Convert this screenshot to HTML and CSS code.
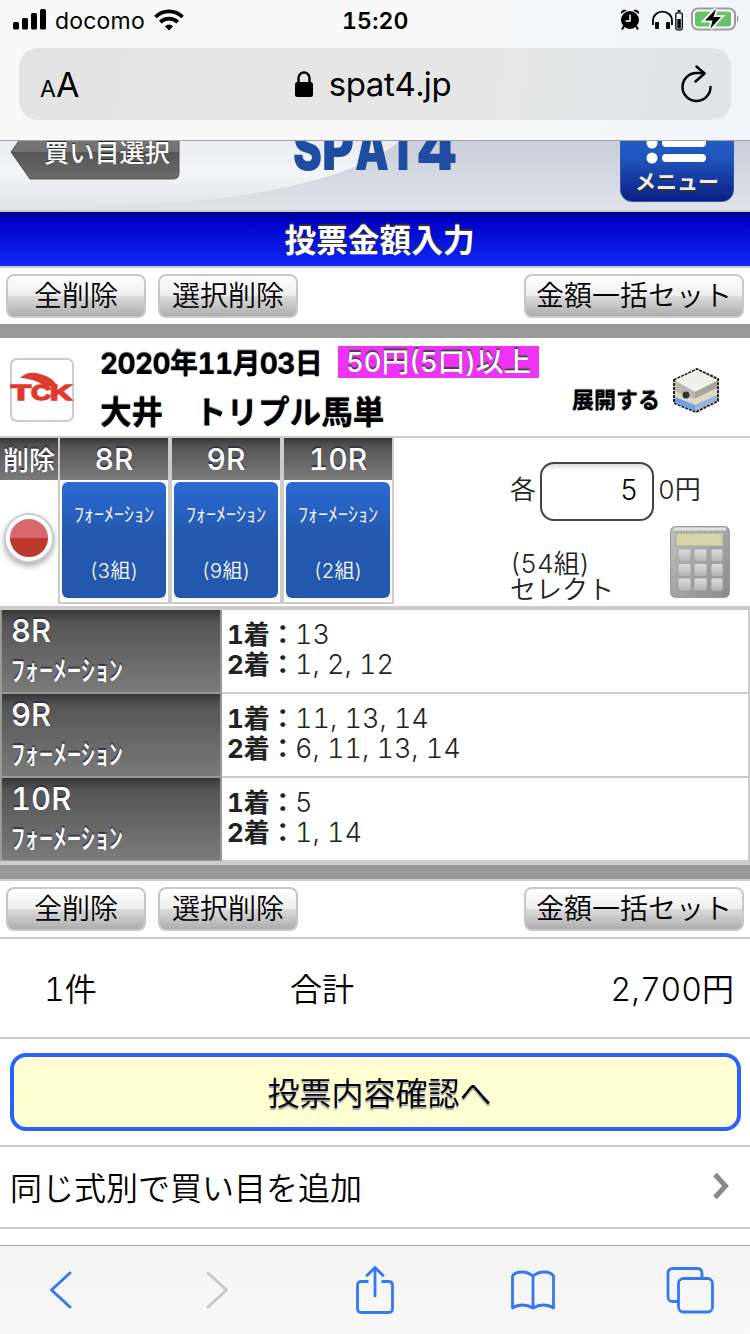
FILE: index.html
```html
<!DOCTYPE html>
<html lang="ja">
<head>
<meta charset="utf-8">
<title>投票金額入力</title>
<link rel="stylesheet" href="styles.css">
</head>
<body>
<div class="browser-top">
  <div class="status">
    <svg class="signal" width="34" height="22" viewBox="0 0 34 22"><rect x="0" y="13" width="6" height="7.500" rx="1.500"/><rect x="9" y="9" width="6" height="11.500" rx="1.500"/><rect x="18" y="4" width="6" height="16.500" rx="1.500"/><rect x="27" y="0" width="6" height="20.500" rx="1.500"/></svg>
    <span class="carrier">docomo</span>
    <svg class="wifi" width="30" height="22" viewBox="0 0 30 22" fill="none" stroke="#000" stroke-width="3.900"><path d="M1.500 8A19 19 0 0 1 28.500 8"/><path d="M6.300 13.200A12.300 12.300 0 0 1 23.700 13.200"/><path d="M15 21.500L10.800 17.300Q15 13.800 19.200 17.300Z" fill="#000" stroke="none"/></svg>
    <span class="clock">15:20</span>
    <span class="status-icons">
      <svg width="18" height="22" viewBox="0 0 18 22"><path d="M0 5V2.500L3 .5 6 1.500Q2 3 0 5ZM18 5V2.500L15 .5 12 1.500Q16 3 18 5Z"/><circle cx="9" cy="11" r="9"/><path d="M3 17l-2 3.500M15 17l2 3.500" stroke="#000" stroke-width="2"/><path d="M9 5.500V12H4.500" fill="none" stroke="#fff" stroke-width="1.500"/></svg>
      <svg class="phones" width="32" height="22" viewBox="0 0 32 22"><path d="M1 16V12C1 -.5 20 -.5 20 12V16" fill="none" stroke="#000" stroke-width="1.800"/><rect x="3" y="13" width="4" height="7" rx="1"/><rect x="14" y="13" width="4" height="7" rx="1"/><rect x="23.800" y="3.800" width="6.500" height="17" rx="1.500" fill="none" stroke="#000" stroke-width="1.300"/><rect x="25.300" y="10" width="3.500" height="9.500"/><rect x="25.500" y="1" width="3" height="1.800"/></svg>
      <svg width="49" height="24" viewBox="0 0 49 24"><rect x="1" y="1.500" width="43" height="21" rx="6" fill="#fff" stroke="#9b9b9d" stroke-width="2"/><rect x="4" y="4.500" width="36" height="15" rx="3" fill="#64c466"/><path d="M46 8q3 4 0 8z" fill="#9b9b9d"/><path d="M25 2L14 13.500h7.500l-2 8L30 10h-7.500Z" stroke="#f4f4f4" stroke-width="4" paint-order="stroke"/></svg>
    </span>
  </div>
  <div class="address">
    <span class="aa"><span class="aa-small">A</span>A</span>
    <span class="url"><svg width="18" height="26" viewBox="0 0 18 26"><path d="M3.500 13V7a5.500 5.500 0 0 1 11 0V13" fill="none" stroke="#000" stroke-width="2.400"/><rect y="11" width="18" height="15" rx="2.500"/></svg>spat4.jp</span>
    <svg class="reload" width="32" height="38" viewBox="0 0 32 38" fill="none" stroke="#000" stroke-width="2.500" stroke-linecap="round" stroke-linejoin="round"><path d="M29.500 22A14 14 0 1 1 15.500 8H23"/><path d="M15.500 1.500L23.500 8.500 14.500 16.500"/></svg>
  </div>
</div>

<div class="site-header">
  <svg class="sweep" width="750" height="69" viewBox="0 0 750 69"><defs><linearGradient id="sweepFill" x1="0" y1="0" x2="0" y2="1"><stop offset="0" stop-color="#c9ced9"/><stop offset="1" stop-color="#dfe2e8"/></linearGradient></defs><path d="M60 66Q320 64 400 0H750V69H60Z" fill="url(#sweepFill)"/></svg>
  <div class="back"><svg width="170" height="56" viewBox="0 0 170 56"><defs><linearGradient id="backFill" x1="0" y1="0" x2="0" y2="1"><stop offset="0" stop-color="#777"/><stop offset=".49" stop-color="#737373"/><stop offset=".5" stop-color="#555"/><stop offset="1" stop-color="#6c6c6c"/></linearGradient></defs><path d="M1 28L20 1H164q5 0 5 5V49q0 6-6 6H20Z" fill="url(#backFill)" stroke="#555"/></svg><span>買い目選択</span></div>
  <svg class="logo" width="162" height="58" viewBox="0 0 162 58"><text x="-1" y="57" textLength="29" lengthAdjust="spacingAndGlyphs">S</text><text x="28" y="57" textLength="32" lengthAdjust="spacingAndGlyphs">P</text><text x="61" y="57" textLength="34" lengthAdjust="spacingAndGlyphs">A</text><text x="94" y="57" textLength="30" lengthAdjust="spacingAndGlyphs">T</text><text x="124" y="57" textLength="38" lengthAdjust="spacingAndGlyphs">4</text></svg>
  <div class="menu"><svg width="60" height="42" viewBox="0 0 60 42" fill="#fff"><circle cx="6" cy="6" r="5.500"/><circle cx="6" cy="21" r="5.500"/><circle cx="6" cy="36" r="5.500"/><rect x="16" y="2" width="44" height="8" rx="4"/><rect x="16" y="17" width="44" height="8" rx="4"/><rect x="16" y="32" width="44" height="8" rx="4"/></svg><span>メニュー</span></div>
</div>

<h1 class="title">投票金額入力</h1>

<div class="actions">
  <button class="btn">全削除</button><button class="btn">選択削除</button><button class="btn btn-wide">金額一括セット</button>
</div>
<div class="divider"></div>

<div class="race">
  <svg class="track" width="64" height="64" viewBox="0 0 64 64"><rect x="1" y="1" width="62" height="62" rx="6" fill="#fff" stroke="#ccc" stroke-width="2"/><path d="M10 20Q18 12 30 16Q43 19 48 29Q36 30 28 24Q18 20 10 20Z" fill="#e13a2c"/><g class="track-name"><text x="1" y="42" textLength="20" lengthAdjust="spacingAndGlyphs">T</text><text x="21" y="42" textLength="20" lengthAdjust="spacingAndGlyphs">C</text><text x="40" y="42" textLength="22" lengthAdjust="spacingAndGlyphs">K</text></g></svg>
  <div class="race-text">
    <div class="race-date"><span class="date">2020年11月03日</span><span class="minimum">50円(5口)以上</span></div>
    <div class="race-name">大井　トリプル馬単</div>
  </div>
  <div class="expand">展開する</div>
  <svg class="box" width="48" height="46" viewBox="0 0 48 46"><path d="M2 12L25 1 46 11V33L24 44 2 35Z" fill="#d6d5cb" stroke="#222" stroke-width="2" stroke-dasharray="3 1"/><path d="M3 12L25 2 45 12 23 24Z" fill="#efefeb"/><path d="M3 13L23 24V33L3 24Z" fill="#b9b8ae"/><path d="M23 24L45 13V22L23 33Z" fill="#a5a59a"/><path d="M3 23L22 31 45 20V26L23 36 3 28Z" fill="#dddac0"/><path d="M3 29L23 37V43L3 35Z" fill="#719fe3"/><path d="M23 37L45 27V32L23 43Z" fill="#96b4df"/><circle cx="14" cy="27" r="3.500" fill="#333"/></svg>
</div>

<div class="bet">
  <div class="del-col"><div class="th th-del">削除</div><div class="del-body"><span class="radio"></span></div></div>
  <div class="leg"><div class="th">8R</div><div class="pick"><span>ﾌｫｰﾒｰｼｮﾝ</span><span>(3組)</span></div></div>
  <div class="leg"><div class="th">9R</div><div class="pick"><span>ﾌｫｰﾒｰｼｮﾝ</span><span>(9組)</span></div></div>
  <div class="leg"><div class="th">10R</div><div class="pick"><span>ﾌｫｰﾒｰｼｮﾝ</span><span>(2組)</span></div></div>
  <div class="amount">
    <div class="amount-row"><span>各</span><span class="field">5</span><span>0円</span></div>
    <div class="select-row"><div class="select-text">(54組)<br>セレクト</div>
      <svg width="60" height="72" viewBox="0 0 60 72"><defs><linearGradient id="calcBody" x1="0" y1="0" x2="1" y2="1"><stop offset="0" stop-color="#c0c0c0"/><stop offset="1" stop-color="#8a8a8a"/></linearGradient><linearGradient id="calcKey" x1="0" y1="0" x2="0" y2="1"><stop offset="0" stop-color="#dedede"/><stop offset="1" stop-color="#b2b2b2"/></linearGradient></defs><rect x=".5" y=".5" width="59" height="71" rx="5" fill="url(#calcBody)" stroke="#999"/><path d="M4 3H56" stroke="#e2e2e2" stroke-width="3"/><rect x="6" y="6" width="47" height="14" fill="#d4d3ab" stroke="#aaa99a"/><path d="M7 7H51" stroke="#8d8d7b" stroke-dasharray="2 1"/><g fill="url(#calcKey)" stroke="#999" stroke-width=".7"><rect x="8" y="23" width="13" height="13" rx="2"/><rect x="24" y="23" width="13" height="13" rx="2"/><rect x="41" y="23" width="12" height="13" rx="2"/><rect x="8" y="37.500" width="13" height="13" rx="2"/><rect x="24" y="37.500" width="13" height="13" rx="2"/><rect x="41" y="37.500" width="12" height="13" rx="2"/><rect x="8" y="52" width="13" height="13" rx="2"/><rect x="24" y="52" width="13" height="13" rx="2"/><rect x="41" y="52" width="12" height="13" rx="2"/></g></svg>
    </div>
  </div>
</div>

<div class="details">
  <div class="detail"><div class="detail-head"><b>8R</b><span>ﾌｫｰﾒｰｼｮﾝ</span></div><div class="detail-body"><div><b>1着：</b>13</div><div><b>2着：</b>1, 2, 12</div></div></div>
  <div class="detail"><div class="detail-head"><b>9R</b><span>ﾌｫｰﾒｰｼｮﾝ</span></div><div class="detail-body"><div><b>1着：</b>11, 13, 14</div><div><b>2着：</b>6, 11, 13, 14</div></div></div>
  <div class="detail"><div class="detail-head"><b>10R</b><span>ﾌｫｰﾒｰｼｮﾝ</span></div><div class="detail-body"><div><b>1着：</b>5</div><div><b>2着：</b>1, 14</div></div></div>
</div>
<div class="divider divider-lined"></div>

<div class="actions">
  <button class="btn">全削除</button><button class="btn">選択削除</button><button class="btn btn-wide">金額一括セット</button>
</div>
<div class="total"><span class="count">1件</span><span class="sum-label">合計</span><span class="sum">2,700円</span></div>
<div class="confirm-row"><div class="confirm">投票内容確認へ</div></div>
<div class="add-row"><span>同じ式別で買い目を追加</span><svg width="18" height="28" viewBox="0 0 18 28"><path d="M2 2.500L12.500 14 2 25.500" fill="none" stroke="#888" stroke-width="5"/></svg></div>
<div class="page-end"></div>

<div class="browser-bottom">
  <svg width="26" height="40" viewBox="0 0 26 40" fill="none" stroke="#3478f6" stroke-width="3" stroke-linecap="round" stroke-linejoin="round"><path d="M21 3L2.500 20 21 37"/></svg>
  <svg width="26" height="40" viewBox="0 0 26 40" fill="none" stroke="#c8c8ca" stroke-width="3" stroke-linecap="round" stroke-linejoin="round"><path d="M3 3L21.500 20 3 37"/></svg>
  <svg width="40" height="50" viewBox="0 0 40 50" fill="none" stroke="#3478f6" stroke-width="2.800" stroke-linecap="round" stroke-linejoin="round"><path d="M13.500 16.500H6.500Q2.500 16.500 2.500 20.500V43.500Q2.500 47.500 6.500 47.500H33.500Q37.500 47.500 37.500 43.500V20.500Q37.500 16.500 33.500 16.500H26.500" stroke-linecap="butt"/><path d="M20 31V2.500M12 10.500L20 2.500 28 10.500"/></svg>
  <svg width="46" height="42" viewBox="0 0 46 42" fill="none" stroke="#3478f6" stroke-width="2.800" stroke-linejoin="round"><path d="M23 7Q18 3 12 3 5 3 2.500 7V39Q7 36 12.500 36 18 36 23 39 28 36 33.500 36 39 36 43.500 39V7Q41 3 34 3 28 3 23 7V39"/></svg>
  <svg width="48" height="48" viewBox="0 0 48 48" fill="none" stroke="#3478f6" stroke-width="2.800"><path d="M12.500 35.500H7Q2 35.500 2 30.500V7.500Q2 2.500 7 2.500H31Q36 2.500 36 7.500V12"/><rect x="12.500" y="12.500" width="34" height="33.500" rx="5"/></svg>
</div>
</body>
</html>
```
FILE: styles.css
```css
* { box-sizing: border-box; }
body { margin: 0; width: 750px; height: 1334px; overflow: hidden; background: #fff; color: #000; font-family: Inter, "Noto Sans CJK JP", sans-serif; font-size: 28px; font-weight: 350; font-variant-numeric: tabular-nums; white-space: nowrap; display: flex; flex-direction: column; }
svg { display: block; flex: none; }
body > * { flex: none; }

.browser-top { height: 141px; background: linear-gradient(100deg, #f8f8f8 60%, #f0f4fb); border-bottom: 1px solid #a2a2a4; }
.status { height: 48px; display: flex; align-items: flex-start; padding: 9px 10px 0 13px; }
.carrier { font-size: 23px; font-weight: 400; line-height: 24px; margin-left: 8px; width: 89px; letter-spacing: .2px; }
.wifi { margin-left: 10px; }
.clock { font-size: 23px; font-weight: 600; line-height: 24px; letter-spacing: .2px; margin-left: 158px; }
.status-icons { margin-left: auto; display: flex; align-items: flex-start; }
.phones { margin: 0 7px 0 13px; }
.status-icons svg:last-child { margin-top: -2px; }
.address { margin: 0 19px; height: 72px; border-radius: 19px; background: linear-gradient(100deg, #e2e3e2, #e6e7e6 70%, #dfe2e8); display: flex; align-items: center; justify-content: space-between; padding: 0 18px 0 21px; }
.aa { font-size: 34px; font-weight: 400; width: 50px; line-height: 40px; padding-top: 5px; }
.aa-small { font-size: 23px; }
.url { font-size: 33px; font-weight: 400; line-height: 40px; letter-spacing: -.4px; display: flex; align-items: center; gap: 16px; margin-left: -25px; }

.site-header { position: relative; height: 69px; overflow: hidden; background: linear-gradient(#e9ebf1, #f4f5f8 45%, #dfe2e8); display: flex; align-items: flex-end; padding: 0 16px 0 10px; }
.sweep { position: absolute; left: 0; top: 0; }
.back { position: relative; margin-bottom: 30px; }
.back span { position: absolute; left: 34px; top: 11px; font-size: 25.200px; line-height: 36px; font-weight: 500; color: #fff; text-shadow: 0 -1px 1px #222; }
.logo { position: relative; margin: 0 0 39px 114px; overflow: visible; }
.logo text { font-family: Inter, sans-serif; font-size: 60px; font-weight: 900; fill: #1d4ca0; }
.menu { position: relative; margin: 0 0 8px auto; width: 114px; height: 92px; border-radius: 12px; border: 1px solid #3158b4; background: linear-gradient(#2b6bd8, #1f53ba 55%, #0a1f85); display: flex; flex-direction: column; align-items: center; padding-top: 11px; }
.menu svg { margin: 0 0 6px -3px; height: 42px; }
.menu span { font-size: 21px; line-height: 24px; font-weight: 700; color: #eee; text-shadow: 0 2px 1px #333; }

.title { margin: 0; height: 58px; border: solid #ccc; border-width: 2px 0; background: linear-gradient(#00008b, #0000c8 16%, #102af5); color: #fff; font-size: 31.700px; font-weight: 700; line-height: 58px; text-align: center; padding-left: 9px; text-shadow: 0 -2px 1px #333; }
.actions { height: 56px; display: flex; align-items: center; gap: 12px; padding: 0 6px; }
.btn { width: 140px; height: 44px; padding: 0; border: 2px solid #c8c8c8; border-radius: 8px; background: linear-gradient(#fefefe, #eee 49%, #dcdcdc 50%, #adadad); color: #000; font: 350 28px/41px Inter, "Noto Sans CJK JP", sans-serif; }
.btn-wide { width: 220px; margin-left: auto; }
.divider { height: 14px; background: #999; }

.race { height: 100px; border-bottom: 2px solid #ccc; display: flex; padding-left: 10px; }
.track { margin-top: 20px; }
.track-name { font-family: "Liberation Sans", sans-serif; font-size: 22px; font-weight: 700; fill: #e13a2c; stroke: #e13a2c; stroke-width: 1.500px; }
.race-text { margin-left: 26px; width: 472px; font-weight: 700; text-shadow: 0 -1px 1px #445; }
.race-date { display: flex; margin-top: 8px; height: 32px; line-height: 36px; }
.date { width: 238px; letter-spacing: -.6px; }
.minimum { width: 201px; background: #ee33f6; color: #fff; text-align: center; font-weight: 500; font-size: 27.500px; line-height: 32px; text-shadow: 0 -2px 1px #444; }
.race-name { font-size: 31.600px; line-height: 46px; margin-top: 12px; }
.expand { font-size: 22px; font-weight: 700; line-height: 32px; margin-top: 46px; width: 100px; text-shadow: 0 -1px 1px #445; }
.box { margin-top: 30px; }

.bet { height: 168px; display: flex; }
.th { height: 42px; background: linear-gradient(#373737, #555 20%, #7b7b7b); color: #fff; text-align: center; font-size: 30px; line-height: 43px; font-weight: 500; text-shadow: 0 -2px 1px #334; }
.th-del { font-size: 26px; line-height: 46px; }
.del-col { width: 58px; }
.del-body { display: flex; justify-content: center; padding-top: 35px; }
.radio { width: 46px; height: 46px; border-radius: 50%; border: 4px solid #fff; background: linear-gradient(#d8686c 50%, #bb392d 50%); box-shadow: 0 0 0 2px #ccc, 0 3px 6px 2px #aaa; }
.leg { width: 112px; height: 166px; border: solid #ccc; border-width: 0 2px 2px; padding: 0; }
.pick { margin: 2px; height: 116px; border-radius: 6px; background: linear-gradient(#2c6ad4, #2358ae 48%); color: #fff; font-size: 20px; text-align: center; display: flex; flex-direction: column; padding-top: 18px; gap: 26px; line-height: 30px; }
.amount { flex: 1; padding: 24px 20px 0 116px; font-size: 26px; color: #222; }
.amount-row { display: flex; height: 59px; line-height: 55px; gap: 4px; }
.field { width: 114px; border: 2px solid #444; border-radius: 14px; text-align: right; padding-right: 14px; color: #000; font-size: 28px; line-height: 52px; background: linear-gradient(#ddd, #fff 12%); }
.select-row { display: flex; justify-content: space-between; margin-top: 5px; }
.select-text { line-height: 26px; padding-top: 25px; }

.details { height: 255px; border-top: 4px solid #ccc; border-right: 2px solid #ccc; }
.detail { display: flex; height: 84px; }
.detail-head { width: 222px; border: 2px solid #999; border-width: 0 2px 2px; background: linear-gradient(#373737, #555 15%, #7b7b7b); color: #fff; display: flex; flex-direction: column; padding-left: 9px; text-shadow: 0 -2px 1px #334; font-weight: 500; }
.detail-head b { font-size: 31px; line-height: 42px; font-weight: 500; }
.detail-head span { line-height: 38px; }
.detail-body { flex: 1; border-bottom: 2px solid #ccc; padding: 10px 0 0 5px; line-height: 30px; font-size: 27px; color: #222; }
.detail-body b { display: inline-block; width: 68px; font-size: 26px; font-weight: 700; }
.divider-lined { height: 20px; border: solid #ccc; border-width: 4px 0 2px; }

.total { height: 102px; border: solid #ccc; border-width: 2px 0; display: grid; grid-template-columns: 246px 1fr 1fr; align-items: center; padding: 4px 16px 0 44px; font-size: 32px; line-height: 44px; }
.sum { text-align: right; }
.confirm-row { height: 108px; padding: 14px 9px 14px 10px; border-bottom: 2px solid #ccc; }
.confirm { height: 78px; border: 4px solid #2864fa; border-radius: 16px; background: #fffed2; text-align: center; font-size: 32px; line-height: 74px; padding-left: 8px; text-shadow: 0 2px 1px #99a; }
.add-row { height: 82px; border-bottom: 2px solid #ccc; display: flex; align-items: center; justify-content: space-between; padding: 0 19px 3px 10px; font-size: 32px; }
.page-end { height: 16px; }
.browser-bottom { height: 89px; border-top: 1px solid #aaa; background: linear-gradient(#f3f3f3, #faf9f9); display: grid; grid-template-columns: 156px 150px 155px 156px 48px; padding-left: 49px; align-items: center; }
```
